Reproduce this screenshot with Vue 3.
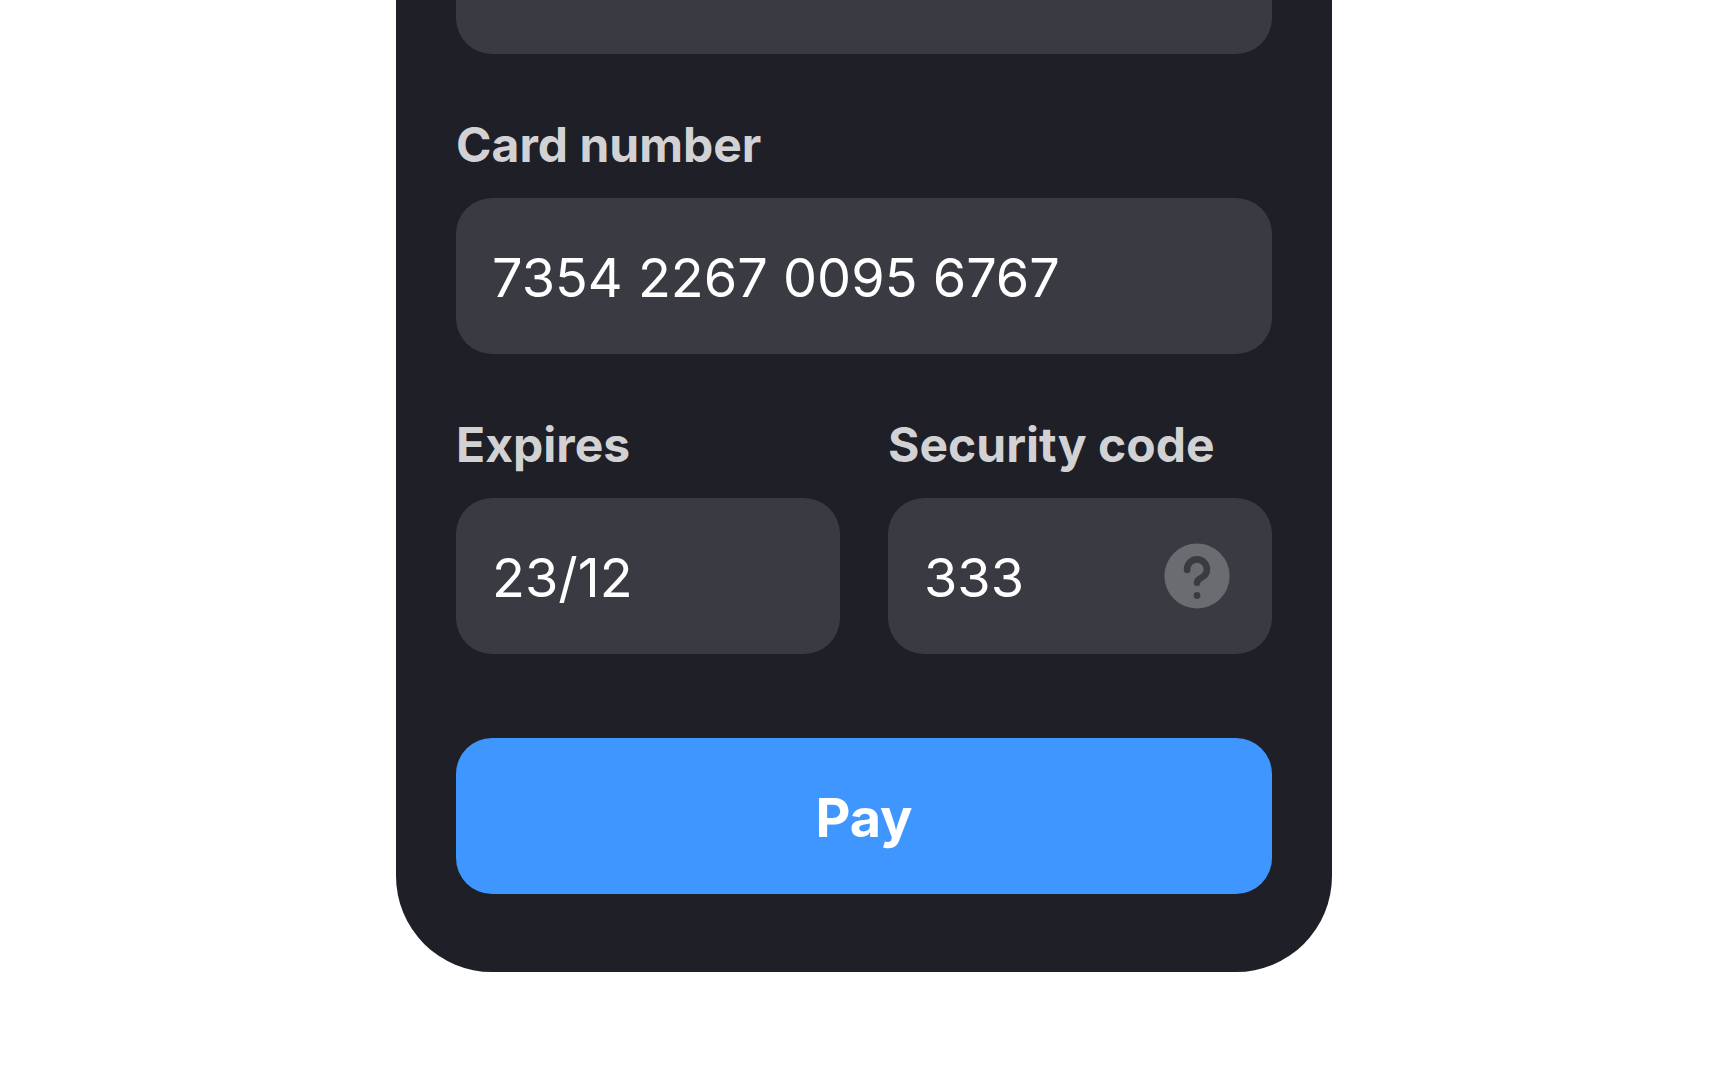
<script setup>
import { ref } from 'vue'

const holder = ref('')
const cardNumber = ref('7354 2267 0095 6767')
const expires = ref('23/12')
const securityCode = ref('333')
</script>

<template>
  <main class="page">
    <form class="card" @submit.prevent>
      <input v-model="holder" class="control control-cut" type="text" aria-label="Name on card" />

      <div class="field">
        <label class="label" for="card-number">Card number</label>
        <div class="control">
          <input id="card-number" v-model="cardNumber" class="value" type="text" inputmode="numeric" />
        </div>
      </div>

      <div class="row">
        <div class="field">
          <label class="label" for="expires">Expires</label>
          <div class="control">
            <input id="expires" v-model="expires" class="value" type="text" />
          </div>
        </div>
        <div class="field">
          <label class="label" for="security-code">Security code</label>
          <div class="control">
            <input id="security-code" v-model="securityCode" class="value" type="text" inputmode="numeric" />
            <button class="help" type="button" aria-label="About the security code">
              <svg viewBox="0 0 66 66" width="66" height="66" aria-hidden="true">
                <circle cx="33" cy="33" r="32.6" fill="#6b6c70" />
                <path
                  d="M23.1 27V26.3a9.9 9.9 0 0 1 19.8 0c0 4.1-2.2 6.7-5.4 8.3-2.8 1.4-4.5 2.6-4.5 5.1"
                  fill="none"
                  stroke="#3a3a42"
                  stroke-width="6.6"
                  stroke-linecap="round"
                  stroke-linejoin="round"
                />
                <circle cx="33" cy="52.5" r="3.4" fill="#3a3a42" />
              </svg>
            </button>
          </div>
        </div>
      </div>

      <button class="pay" type="submit">Pay</button>
    </form>
  </main>
</template>

<style>
body {
  background: #ffffff;
}
</style>

<style scoped>
.page,
.page * {
  box-sizing: border-box;
}

.page {
  font-family: Inter, "Liberation Sans", sans-serif;
  padding-bottom: 108px;
}

.card {
  display: flex;
  flex-direction: column;
  gap: 60px;
  max-width: 936px;
  margin: 0 auto;
  padding: 0 60px 78px;
  background: #1f1f28;
  border-radius: 0 0 96px 96px;
}

.field {
  display: flex;
  flex-direction: column;
  gap: 22px;
  min-width: 0;
}

.row {
  display: grid;
  grid-template-columns: 1fr 1fr;
  gap: 48px;
}

.label {
  font-size: 48px;
  line-height: 62px;
  font-weight: 700;
  color: #d2d2d4;
}

.control {
  display: flex;
  align-items: center;
  height: 156px;
  padding: 0 42px 0 36px;
  border: 0;
  border-radius: 36px;
  background: #3a3a42;
  color: #ffffff;
  font-family: inherit;
  font-size: 54px;
}

.control-cut {
  height: 54px;
  border-radius: 0 0 36px 36px;
}

.value {
  flex: 1;
  min-width: 0;
  height: 100%;
  padding: 2px 0 0;
  border: 0;
  outline: 0;
  background: transparent;
  color: inherit;
  font-family: inherit;
  font-size: 54px;
  font-weight: 400;
}

.help {
  display: flex;
  flex: none;
  padding: 0;
  border: 0;
  border-radius: 50%;
  background: transparent;
  cursor: pointer;
}

.pay {
  height: 156px;
  margin-top: 24px;
  padding: 2px 36px 0;
  border: 0;
  border-radius: 36px;
  background: #4096ff;
  color: #ffffff;
  font-family: inherit;
  font-size: 54px;
  font-weight: 700;
  cursor: pointer;
}
</style>
